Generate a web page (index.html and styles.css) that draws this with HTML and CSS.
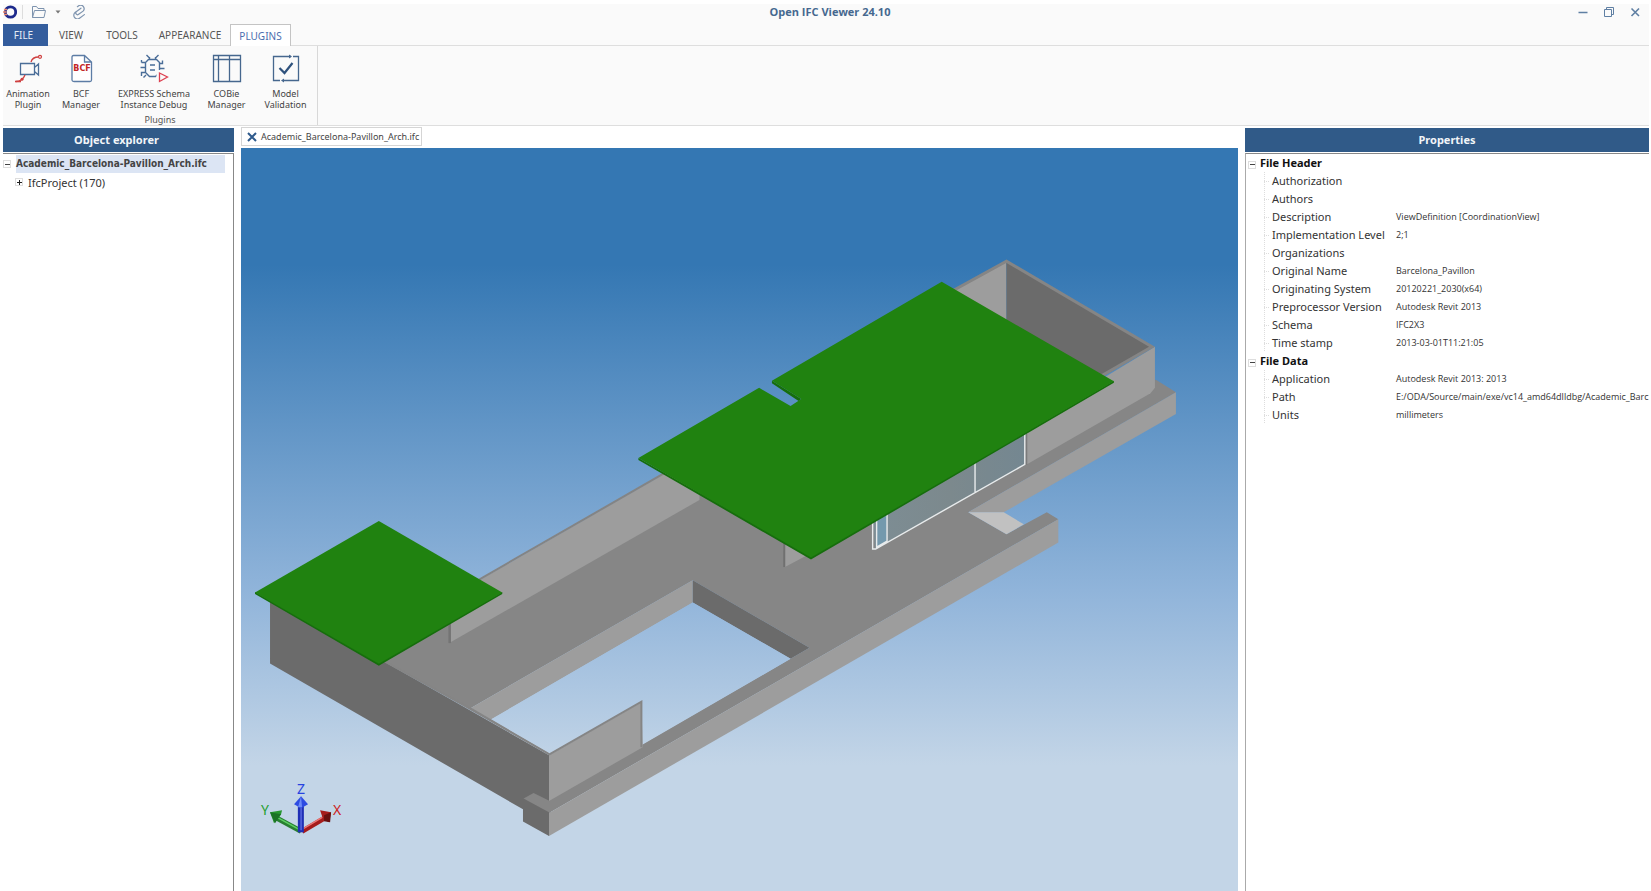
FILE: index.html
```html
<!DOCTYPE html>
<html lang="en">
<head>
<meta charset="utf-8">
<meta name="viewport" content="width=device-width, initial-scale=1">
<title>Open IFC Viewer 24.10</title>
<link rel="stylesheet" href="styles.css">
</head>
<body>
<div class="app">
  <header class="titlebar">
    <div class="quick">
      <svg class="logo" width="14" height="16" viewBox="0 0 14 16" aria-hidden="true">
        <circle cx="7.500" cy="8" r="5.200" fill="none" stroke="#1d2a8c" stroke-width="2.800"/>
        <path d="M1 5.500h3M0 8h3.500M1 10.500h3" stroke="#f08a6c" stroke-width="1.300"/>
      </svg>
      <span class="rule"></span>
      <button class="tool" aria-label="Open">
        <svg width="16" height="14" viewBox="0 0 16 14"><path d="M1.500 12.500V1.500h4l1.500 2h6v2M1.500 12.500l2-7h11l-1.500 7z" fill="none" stroke="#7d93ae" stroke-linejoin="round"/></svg>
      </button>
      <button class="tool drop" aria-label="More">
        <svg width="6" height="4" viewBox="0 0 6 4"><path d="M0.500 0.500h5l-2.500 3z" fill="#777"/></svg>
      </button>
      <button class="tool" aria-label="Attach">
        <svg width="16" height="14" viewBox="0 0 16 14"><path d="M11 4.500H5.500a1.800 1.800 0 0 0 0 3.600H11a3.500 3.500 0 0 0 0-6.900H9M5 4.500H4a3.600 3.600 0 0 0 0 7.200h6" transform="rotate(-36 8 7)" fill="none" stroke="#7d93ae" stroke-width="1.200" stroke-linecap="round"/></svg>
      </button>
    </div>
    <h1 class="title">Open IFC Viewer 24.10</h1>
    <div class="window-buttons">
      <button class="tool" aria-label="Minimize"><svg width="12" height="12" viewBox="0 0 12 12"><path d="M1.500 6.500h9" stroke="#5f7fa3" stroke-width="1.500"/></svg></button>
      <button class="tool" aria-label="Restore"><svg width="12" height="12" viewBox="0 0 12 12"><path d="M1.500 3.500h7v7h-7zM3.500 3.500v-2h7v7h-2" fill="none" stroke="#5f7fa3"/></svg></button>
      <button class="tool" aria-label="Close"><svg width="12" height="12" viewBox="0 0 12 12"><path d="M2.500 2.500l7.500 7.500M10 2.500l-7.500 7.500" stroke="#5f7fa3" stroke-width="1.600"/></svg></button>
    </div>
  </header>

  <nav class="tabs" aria-label="Ribbon">
    <button class="tab file">FILE</button>
    <button class="tab view">VIEW</button>
    <button class="tab tools">TOOLS</button>
    <button class="tab appearance">APPEARANCE</button>
    <button class="tab active">PLUGINS</button>
  </nav>

  <section class="ribbon">
    <div class="group">
      <div class="commands">
        <button class="command">
          <svg width="30" height="30" viewBox="0 0 30 30" fill="none">
            <path d="M7.500 9.500h14v11h-14zM21.500 13.500l4-3.500v11l-4-3.500" stroke="#4a6d98" stroke-width="1.300"/>
            <path d="M18 8c1-3.500 3.500-5 7.500-5M3 27.500c4 0 7-1.500 9-6.500" stroke="#cf4040" stroke-width="1.300"/>
            <circle cx="27" cy="2.800" r="1.500" stroke="#cf4040" stroke-width="1.200"/>
            <circle cx="9" cy="25.200" r="1.500" fill="#cf4040"/><path d="M2 27.500h6" stroke="#cf4040" stroke-width="1.600"/>
          </svg>
          <span>Animation<br>Plugin</span>
        </button>
        <button class="command">
          <svg width="30" height="30" viewBox="0 0 30 30">
            <path d="M7.500 1.500h11l7 6.500V26q0 1.500-1.500 1.500h-16Q6 27.500 6 26V3Q6 1.500 7.500 1.500zM18.500 1.500V8H25" fill="#fff" stroke="#5c7ca5" stroke-width="1.300"/>
            <text class="bcf" x="16" y="17" text-anchor="middle">BCF</text>
          </svg>
          <span>BCF<br>Manager</span>
        </button>
        <button class="command">
          <svg width="30" height="30" viewBox="0 0 30 30" fill="none">
            <path d="M9.500 5.500h8l3 3v10l-4 4h-6l-4-4v-10zM10.500 5.500V3M16.500 5.500V3M7.500 1l3 3M19.500 1l-3 3M6 8.500H2.500M6 13.500H1.500M6 18.500H2.500v3.500M2.500 8.500V6M20.500 9.500h3v-3M20.500 14.500h5M11 11h5M11 16h5M7 21l-2.500 2.500" stroke="#4a6d98" stroke-width="1.400"/>
            <path d="M17.500 16v10h8v-10z" fill="#fafafa"/>
            <path d="M20.500 19l8 4-8 4.500z" fill="#fafafa" stroke="#dd4050" stroke-width="1.300"/>
          </svg>
          <span>EXPRESS Schema<br>Instance Debug</span>
        </button>
        <button class="command">
          <svg width="30" height="30" viewBox="0 0 30 30" fill="none">
            <path d="M1.500 1.500h27v26h-27zM1.500 5.500h27M6.500 1.500v26M17.500 1.500v26" stroke="#46678e" stroke-width="1.300"/>
          </svg>
          <span>COBie<br>Manager</span>
        </button>
        <button class="command">
          <svg width="30" height="30" viewBox="0 0 30 30" fill="none">
            <path d="M9 26.500H2.500V2.500H20M22 2.500h5.500v24H12" stroke="#46678e" stroke-width="1.300"/>
            <path d="M18 .5l3 2-3 2zM13 24.500l-3 2 3 2z" fill="#46678e"/>
            <path d="M8.500 14l5 5 8-10" stroke="#2f527d" stroke-width="2.200"/>
          </svg>
          <span>Model<br>Validation</span>
        </button>
      </div>
      <div class="group-name">Plugins</div>
    </div>
  </section>

  <main class="workspace">
    <aside class="panel explorer">
      <h2 class="panel-title">Object explorer</h2>
      <ul class="tree">
        <li class="branch"><button class="toggle minus" aria-label="Collapse"></button><span class="root">Academic_Barcelona-Pavillon_Arch.ifc</span></li>
        <li class="branch child"><button class="toggle plus" aria-label="Expand"></button><span>IfcProject (170)</span></li>
      </ul>
    </aside>

    <section class="document">
      <div class="doc-tabs">
        <div class="doc-tab">
          <button class="tool" aria-label="Close document"><svg width="12" height="12" viewBox="0 0 12 12"><path d="M2 2l8 8M10 2l-8 8" stroke="#2f5a8c" stroke-width="2"/></svg></button>
          <span>Academic_Barcelona-Pavillon_Arch.ifc</span>
        </div>
      </div>
      <div class="canvas">
        <svg class="scene" viewBox="241 148 996 743" preserveAspectRatio="xMidYMid slice" role="img" aria-label="3D model">
          <defs>
            <linearGradient id="sky" x1="0" y1="265" x2="0" y2="765" gradientUnits="userSpaceOnUse">
              <stop offset="0" stop-color="#3477b3"/><stop offset="0.650" stop-color="#90b4da"/><stop offset="1" stop-color="#c3d5e7"/>
            </linearGradient>
            <linearGradient id="glass" x1="874" y1="0" x2="1025" y2="0" gradientUnits="userSpaceOnUse">
              <stop offset="0" stop-color="#7d8d94"/><stop offset="0.500" stop-color="#7c898d"/><stop offset="1" stop-color="#748791"/>
            </linearGradient>
          </defs>
          <rect x="241" y="148" width="996" height="743" fill="url(#sky)"/>
          <!-- floor slab with the pool opening -->
          <path fill="#868686" fill-rule="evenodd" d="M378 658L449 624L700 470L1025 440L1155 380L1175 392.300L967.500 512.300L1005.700 534.300L1046 512.300L1057.500 519.300L548.700 812.700L523.300 798.300L533.300 792.700L548 800V754zM470.700 707.700L490.700 719.300L548.700 753L640 745L790 658.700L809 647.700L692.300 580.300z"/>
          <path fill="#9d9d9d" d="M548.700 812.700L1057.500 519.300V542.500L548.700 835.700z"/>
          <path fill="#9d9d9d" d="M967.500 512.300L1175 392.300V414L1003 512.300z"/>
          <path fill="#c1c1c1" d="M967.500 512.300H1003L1023 524.300L1005.700 534.300z"/>
          <!-- pool walls -->
          <path fill="#9d9d9d" d="M470.700 707.700L692.300 580.300V602.300L490.700 719.300z"/>
          <path fill="#6b6b6b" d="M692.300 580.300L809 647.700L790 658.700L692.300 602.300z"/>
          <path fill="url(#sky)" d="M490.700 719.300L692.300 602.300L790 658.700L642.300 744.300L549 790V753z"/>
          <!-- rear wall -->
          <path fill="#9d9d9d" d="M480.700 579.500L663 474.500L699 478V500L449 643V624z"/>
          <path fill="none" stroke="#848484" stroke-width="2" d="M478 580L666 472"/>
          <path fill="none" stroke="#747474" stroke-width="2.500" d="M449.500 622V643"/>
          <!-- left wall -->
          <path fill="#6b6b6b" d="M270 600L378 658L548.700 755V812L548.700 835.700L522.700 821.300V809L270 663.300z"/>
          <path fill="none" stroke="#858585" stroke-width="2" d="M384 661L470.700 708.500L548.700 754"/>
          <path fill="#868686" d="M523.300 798.300L533.300 792.700L550 801V812.700z"/>
          <!-- short front wall -->
          <path fill="#9d9d9d" d="M548.700 755L641 702L642.300 747L548.700 800.700z"/>
          <path fill="none" stroke="#858585" stroke-width="2" d="M548.700 754.500L641 701.500V747"/>
          <!-- small roof -->
          <path fill="#166d0d" d="M255 592L378.700 661L502 592V594L378.700 665.500L255 594z"/>
          <path fill="#208210" d="M378.700 521L502 592.500L378.700 663.500L255 592.500z"/>
          <!-- courtyard -->
          <path fill="#9d9d9d" d="M950 293L1005.700 261V325L990 325z"/>
          <path fill="#6b6b6b" d="M1005.700 262L1152 347L1095 381L1005.700 325z"/>
          <path fill="#9d9d9d" d="M1154 347V388L1149.600 393.300L1025 465V425z"/>
          <path fill="none" stroke="#858585" stroke-width="3" d="M952 291L1005.700 261.500L1151 347L1098 377.500"/>
          <!-- glazing -->
          <path fill="url(#glass)" d="M872 521L1024 433V465L874.600 549z"/>
          <path fill="#7499ad" d="M876 520L886 514V542L876 547z"/>
          <path fill="none" stroke="#7b7b7b" stroke-width="2" d="M1025.500 434V465"/>
          <path fill="none" stroke="#e8ebec" stroke-width="1.400" d="M872 521V549H875L1024 464.500V434M974.300 462V492.700M886.400 513V541L876 547V519"/>
          <!-- recess under the main roof -->
          <path fill="#9d9d9d" d="M783 541L807 555L784 567.300z"/>
          <path fill="none" stroke="#707070" stroke-width="2" d="M783.700 541V567"/>
          <!-- main roof -->
          <path fill="#166d0d" d="M638 458L810.400 556L1113 381V383L810.400 559.500L638 460zM771.400 381L800.700 399L798 401L771.400 383.500z"/>
          <path fill="#208210" d="M941 282L1113 381.500L810.400 557.500L638 458L758.600 388L790 406L800.700 399L771.400 381z"/>
          <!-- axis triad -->
          <path stroke="#277f31" stroke-width="5" d="M301 831L277 818"/>
          <path stroke="#5bcf62" stroke-width="1.500" d="M299 829L278 817.500"/>
          <path fill="#27972f" d="M270 812l12-2-1 4-7 9z"/><path fill="#1b7425" d="M270 812l5 11 6-9z"/>
          <path stroke="#a51c1c" stroke-width="5" d="M302 831L324 818"/>
          <path stroke="#ea7777" stroke-width="1.500" d="M302 829L323 816.500"/>
          <path fill="#a51c1c" d="M331 812l-11-2 3 9 6 3z"/><path fill="#681010" d="M331 812l-7 3 0 6 6 1z"/>
          <path stroke="#1f2fb5" stroke-width="6" d="M300.800 832V802"/>
          <path stroke="#5868df" stroke-width="1.500" d="M301 830V802"/>
          <path fill="#2e4ce2" d="M301 796l7 8-7 4-7-4z"/><path fill="#6d8bf8" d="M301 796l1 11-4 0z"/>
          <text class="axis z" x="301" y="794" text-anchor="middle">Z</text>
          <text class="axis y" x="265" y="815" text-anchor="middle">Y</text>
          <text class="axis x" x="337" y="815" text-anchor="middle">X</text>
        </svg>
      </div>
    </section>

    <aside class="panel properties">
      <h2 class="panel-title">Properties</h2>
      <div class="sheet">
        <table class="props">
          <colgroup><col class="names"><col></colgroup>
          <tbody>
            <tr class="head"><th colspan="2"><button class="toggle minus" aria-label="Collapse"></button>File Header</th></tr>
            <tr><th>Authorization</th><td></td></tr>
            <tr><th>Authors</th><td></td></tr>
            <tr><th>Description</th><td>ViewDefinition [CoordinationView]</td></tr>
            <tr><th>Implementation Level</th><td>2;1</td></tr>
            <tr><th>Organizations</th><td></td></tr>
            <tr><th>Original Name</th><td>Barcelona_Pavillon</td></tr>
            <tr><th>Originating System</th><td>20120221_2030(x64)</td></tr>
            <tr><th>Preprocessor Version</th><td>Autodesk Revit 2013</td></tr>
            <tr><th>Schema</th><td>IFC2X3</td></tr>
            <tr><th>Time stamp</th><td>2013-03-01T11:21:05</td></tr>
          </tbody>
          <tbody>
            <tr class="head"><th colspan="2"><button class="toggle minus" aria-label="Collapse"></button>File Data</th></tr>
            <tr><th>Application</th><td>Autodesk Revit 2013: 2013</td></tr>
            <tr><th>Path</th><td>E:/ODA/Source/main/exe/vc14_amd64dlldbg/Academic_Barc</td></tr>
            <tr><th>Units</th><td>millimeters</td></tr>
          </tbody>
        </table>
      </div>
    </aside>
  </main>
</div>
</body>
</html>
```
FILE: styles.css
```css
* { box-sizing: border-box; }
body {
  margin: 0;
  background: #fff;
  color: #333;
  font-family: "Noto Sans", "Open Sans", sans-serif;
  font-size: 11px;
}
button {
  margin: 0;
  padding: 0;
  border: 0;
  background: none;
  color: inherit;
  font: inherit;
}
svg { display: block; }
h1, h2 { margin: 0; }

.app {
  display: flex;
  flex-direction: column;
  height: 100vh;
  padding: 4px 2px 0 3px;
}

.titlebar {
  display: grid;
  grid-template-columns: 1fr auto 1fr;
  align-items: center;
  height: 20px;
  padding-bottom: 6px;
  background: #fafafa;
}
.quick { display: flex; align-items: center; }
.rule { width: 1px; height: 14px; margin: 0 8px 0 5px; background: #ddd; }
.drop { margin: 0 11px 0 8px; }
.title {
  padding-left: 8px;
  color: #45688f;
  font: bold 11px/14px "Open Sans", sans-serif;
}
.window-buttons { display: flex; justify-content: flex-end; gap: 14px; padding-right: 8px; }

.tabs {
  display: flex;
  height: 22px;
  background: #fafafa;
  border-bottom: 1px solid #dedede;
  color: #555;
  font-size: 10px;
}
.tab { height: 22px; line-height: 22px; }
.file { width: 45px; padding-right: 4px; background: #345d9d; color: #e4ecf6; }
.view { width: 46px; }
.tools { width: 56px; }
.appearance { width: 80px; }
.active {
  width: 61px;
  background: #fff;
  border: 1px solid #c4c4c4;
  border-bottom: 0;
  color: #4b6eae;
  line-height: 20px;
}

.ribbon { display: flex; height: 80px; background: #fafafa; border-bottom: 1px solid #dedede; }
.group { display: flex; flex-direction: column; justify-content: space-between; height: 79px; padding-top: 2px; border-right: 1px solid #d8d8d8; }
.commands { display: grid; grid-template-columns: 50px 56px 90px 55px 63px; }
.command {
  display: flex;
  flex-direction: column;
  align-items: center;
  padding-top: 6px;
  color: #444;
  font-size: 9px;
  line-height: 11px;
}
.command span { margin-top: 4px; }
.group-name { color: #555; font-size: 9px; line-height: 11px; text-align: center; }
.bcf { fill: #c22626; font: bold 8px "DejaVu Sans", sans-serif; }

.workspace {
  display: grid;
  flex: 1;
  grid-template-columns: 231px minmax(0, 1fr) 404px;
  column-gap: 7px;
  min-height: 0;
}
.panel { display: flex; flex-direction: column; min-width: 0; padding-top: 2px; }
.panel-title {
  height: 24px;
  margin-bottom: 1px;
  background: #305a88;
  color: #f2f5f8;
  font: bold 11px/24px "Noto Sans", sans-serif;
  text-align: center;
}
.explorer .panel-title { padding-right: 4px; }
.tree, .sheet { flex: 1; margin: 0; border-top: 1px solid #888; overflow: hidden; }
.tree { padding: 1px 8px 0 0; border-right: 1px solid #888; list-style: none; }
.sheet { border-left: 1px solid #aaa; }
.branch { display: flex; align-items: center; height: 18px; gap: 5px; white-space: nowrap; }
.child { padding-left: 12px; }
.root { flex: 1; background: #dce5f4; color: #444; font: bold 10px/18px "DejaVu Sans Condensed", "Open Sans", sans-serif; }
.toggle {
  display: inline-flex;
  flex: none;
  align-items: center;
  justify-content: center;
  width: 8px;
  height: 8px;
  border: 1px solid #ddd;
  font: 10px/8px "DejaVu Sans", sans-serif;
}
.minus::before, .plus::before {
  width: 5px;
  height: 5px;
  background: linear-gradient(#444, #444) center / 5px 1px no-repeat;
  content: "";
}
.plus::before { background: linear-gradient(#222, #222) center / 5px 1px no-repeat, linear-gradient(#222, #222) center / 1px 5px no-repeat; }

.document { display: flex; flex-direction: column; min-width: 0; min-height: 0; }
.doc-tabs { display: flex; height: 22px; padding-top: 1px; }
.doc-tab {
  display: flex;
  align-items: center;
  gap: 3px;
  height: 19px;
  padding: 0 2px 0 4px;
  border: 1px solid #d5d5d5;
  color: #444;
  font-size: 9px;
  line-height: 17px;
  white-space: nowrap;
}
.canvas { flex: 1; min-height: 0; }
.scene { width: 100%; height: 100%; }
.axis { font: 14px "Noto Sans", sans-serif; }
.x { fill: #cc2222; }
.y { fill: #25a02f; }
.z { fill: #2743e0; }

.props { width: 100%; border-collapse: collapse; table-layout: fixed; }
.names { width: 150px; }
.props th, .props td { height: 18px; padding: 0; line-height: 18px; text-align: left; white-space: nowrap; }
.props th { padding-left: 26px; font-weight: normal; }
.props td { font-family: "Open Sans", sans-serif; font-size: 9px; }
.props .head th { padding-left: 2px; color: #111; font-weight: bold; }
.props .toggle { margin-right: 4px; vertical-align: 0; }
.props tr:not(.head) th {
  background:
    repeating-linear-gradient(#ddd 0 1px, transparent 1px 2px) 18px 0 / 1px 100% no-repeat,
    repeating-linear-gradient(90deg, #ddd 0 1px, transparent 1px 2px) 18px 9px / 6px 1px no-repeat;
}
```
